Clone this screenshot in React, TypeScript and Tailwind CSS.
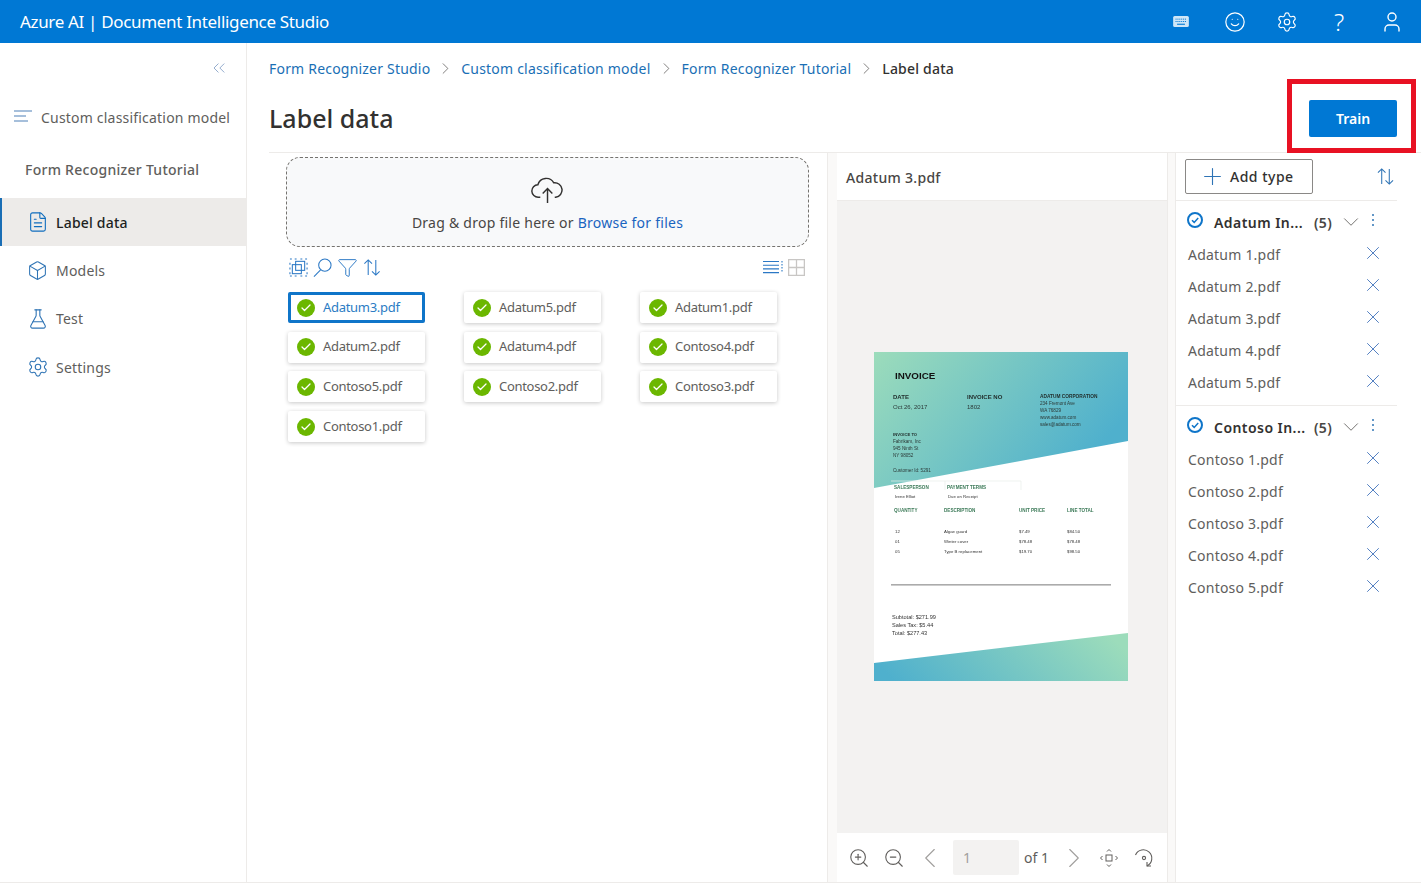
import { Box, ChevronDown, ChevronLeft, ChevronRight, ChevronsLeft, FileText, FlaskConical, Plus, Settings, Smile, User, X, ZoomIn, ZoomOut, Filter, Check } from "lucide-react"

const FILES = [
  "Adatum3.pdf", "Adatum5.pdf", "Adatum1.pdf",
  "Adatum2.pdf", "Adatum4.pdf", "Contoso4.pdf",
  "Contoso5.pdf", "Contoso2.pdf", "Contoso3.pdf",
  "Contoso1.pdf",
]

const GROUPS = [
  { name: "Adatum In...", files: ["Adatum 1.pdf", "Adatum 2.pdf", "Adatum 3.pdf", "Adatum 4.pdf", "Adatum 5.pdf"] },
  { name: "Contoso In...", files: ["Contoso 1.pdf", "Contoso 2.pdf", "Contoso 3.pdf", "Contoso 4.pdf", "Contoso 5.pdf"] },
]

function SortIcon({ className }: { className?: string }) {
  return (
    <svg viewBox="0 0 18 20" className={className} fill="none" stroke="currentColor" strokeWidth="1.1">
      <path d="M5 18V2M1 6l4-4 4 4M13 2v16M9 14l4 4 4-4" />
    </svg>
  )
}

function Invoice() {
  const label = "#3c7a58"
  return (
    <svg viewBox="0 0 254 329" className="h-[329px] w-[254px] blur-[0.3px]" fontFamily="Liberation Sans, sans-serif">
      <defs>
        <linearGradient id="top" x1="0" y1="0" x2="1" y2="0.45">
          <stop offset="0" stopColor="#9cdcbb" />
          <stop offset="1" stopColor="#4fb0cd" />
        </linearGradient>
        <linearGradient id="bottom" x1="0" y1="0.6" x2="1" y2="0.4">
          <stop offset="0" stopColor="#4fb0cd" />
          <stop offset="1" stopColor="#9cdcbb" />
        </linearGradient>
      </defs>
      <rect width="254" height="329" fill="#fff" />
      <polygon points="0,0 254,0 254,89 0,136" fill="url(#top)" />
      <polygon points="0,311 254,281 254,329 0,329" fill="url(#bottom)" />
      <text x="21" y="27" fontSize="9.8" fontWeight="700" fill="#111">INVOICE</text>
      <g fontSize="6" fontWeight="700" fill="#22302e">
        <text x="19" y="47">DATE</text>
        <text x="93" y="47">INVOICE NO</text>
        <text x="166" y="46" fontSize="4.8">ADATUM CORPORATION</text>
        <text x="19" y="84" fontSize="4.2">INVOICE TO</text>
      </g>
      <g fontSize="6" fill="#2c3a38">
        <text x="19" y="57">Oct 26, 2017</text>
        <text x="93" y="57">1802</text>
      </g>
      <g fontSize="4.6" fill="#2c3a38">
        <text x="166" y="53">234 Fremont Ave</text>
        <text x="166" y="60">WA 76829</text>
        <text x="166" y="67">www.adatum.com</text>
        <text x="166" y="74">sales@adatum.com</text>
        <text x="19" y="91">Fabrikam, Inc</text>
        <text x="19" y="98">945 Ninth St</text>
        <text x="19" y="105">NY 98052</text>
        <text x="19" y="120">Customer Id: 5291</text>
      </g>
      <path d="M17 129h130M71 129v9M147 129v9" stroke="#e8eeea" strokeWidth="0.7" fill="none" />
      <g fontSize="4.6" fontWeight="700" fill={label}>
        <text x="20" y="137">SALESPERSON</text>
        <text x="73" y="137">PAYMENT TERMS</text>
        <text x="20" y="160">QUANTITY</text>
        <text x="70" y="160">DESCRIPTION</text>
        <text x="145" y="160">UNIT PRICE</text>
        <text x="193" y="160">LINE TOTAL</text>
      </g>
      <g fontSize="4.3" fill="#333">
        <text x="21" y="146">Irene Elliot</text>
        <text x="74" y="146">Due on Receipt</text>
        <text x="21" y="181">12</text>
        <text x="70" y="181">Algae guard</text>
        <text x="145" y="181">$7.49</text>
        <text x="193" y="181">$84.50</text>
        <text x="21" y="191">01</text>
        <text x="70" y="191">Winter cover</text>
        <text x="145" y="191">$78.48</text>
        <text x="193" y="191">$78.48</text>
        <text x="21" y="201">05</text>
        <text x="70" y="201">Type B replacement</text>
        <text x="145" y="201">$19.70</text>
        <text x="193" y="201">$98.50</text>
      </g>
      <rect x="17" y="232" width="220" height="1.6" fill="#ababab" />
      <g fontSize="5.6" fill="#333">
        <text x="18" y="267">Subtotal: $271.99</text>
        <text x="18" y="275">Sales Tax: $5.44</text>
        <text x="18" y="283">Total: $277.43</text>
      </g>
    </svg>
  )
}

export default function App() {
  return (
    <div className="relative flex h-[883px] w-[1421px] flex-col overflow-hidden bg-white font-['Noto_Sans',sans-serif] text-[#323130]">
      <header className="flex h-[43px] shrink-0 items-center justify-between bg-[#0078d4] pl-5 pr-[17px] text-white">
        <span className="text-[17px] leading-none tracking-[-0.33px]">Azure AI | Document Intelligence Studio</span>
        <div className="flex items-center gap-[30px]">
          <svg viewBox="0 0 20 14" className="mr-[4px] h-[11px] w-[18px]">
            <rect width="20" height="14" rx="2" fill="#cfe6f7" />
            <path d="M3 4h14M3 7h14" stroke="#0078d4" strokeWidth="1.2" strokeDasharray="1.4 1" />
            <path d="M5 10.5h10" stroke="#0078d4" strokeWidth="1.4" />
          </svg>
          <Smile size={22} strokeWidth={1.3} />
          <Settings size={22} strokeWidth={1.3} />
          <span className="w-[22px] text-center text-[24px] font-light leading-none">?</span>
          <User size={24} strokeWidth={1.4} />
        </div>
      </header>

      <div className="flex min-h-0 flex-1 border-b border-[#edebe9]">
        <nav className="flex w-[247px] shrink-0 flex-col border-r border-[#edebe9] text-[14px] tracking-[0.2px]">
          <div className="flex h-[50px] items-center justify-end pr-[17px] text-[#7f9cc4]">
            <ChevronsLeft size={20} strokeWidth={1} />
          </div>
          <div className="mt-[8px] flex h-[32px] items-center gap-[9px] pl-[14px] text-[#605e5c]">
            <svg viewBox="0 0 18 12" className="mb-[3px] h-[12px] w-[18px]" stroke="#4f80b8" strokeWidth="1.1">
              <path d="M0 1h18M0 6h12M0 11h14" />
            </svg>
            <span className="text-[14px] tracking-[0.2px]">Custom classification model</span>
          </div>
          <div className="mt-[27px] h-[20px] pl-[25px] text-[14px] font-medium leading-[20px] tracking-[0.27px] text-[#605e5c]">Form Recognizer Tutorial</div>
          <div className="mt-[18px] flex h-[48px] items-center gap-[7px] border-l-2 border-[#1a6eb5] bg-[#edebe9] pl-[25px] font-medium text-[#201f1e]">
            <FileText size={22} strokeWidth={1.2} className="text-[#106ebe]" />
            <span>Label data</span>
          </div>
          {[
            { label: "Models", Icon: Box, size: 21 },
            { label: "Test", Icon: FlaskConical, size: 22 },
            { label: "Settings", Icon: Settings, size: 22 },
          ].map(({ label, Icon, size }) => (
            <div key={label} className="flex h-[48.5px] items-center pl-[27px] text-[#605e5c]">
              <span className="flex w-[29px] justify-start">
                <Icon size={size} strokeWidth={1.2} className="text-[#2f74b5]" />
              </span>
              <span>{label}</span>
            </div>
          ))}
        </nav>

        <main className="flex min-w-0 flex-1 flex-col pl-[22px]">
          <div className="flex h-[50px] items-center gap-[6px] text-[14px] tracking-[0.2px] text-[#1a6fb5]">
            <span>Form Recognizer Studio</span>
            <ChevronRight size={19} strokeWidth={1} className="text-[#605e5c]" />
            <span>Custom classification model</span>
            <ChevronRight size={19} strokeWidth={1} className="text-[#605e5c]" />
            <span>Form Recognizer Tutorial</span>
            <ChevronRight size={19} strokeWidth={1} className="text-[#605e5c]" />
            <span className="font-medium text-[#323130]">Label data</span>
          </div>
          <div className="flex h-[59px] items-center justify-between pb-[8px] pr-[24px]">
            <h1 className="text-[25px] font-medium leading-none text-[#323130]">Label data</h1>
            <button className="mt-[-1px] h-[37px] w-[88px] rounded-[2px] bg-[#0078d4] text-[14px] font-semibold text-white">Train</button>
          </div>

          <div className="flex min-h-0 flex-1 border-t border-[#edebe9] bg-[#faf9f8]">
            <section className="flex w-[559px] shrink-0 flex-col border-r border-[#edebe9] bg-white pl-[17px]">
              <div className="mt-[4px] flex h-[90px] w-[523px] flex-col items-center rounded-[14px] border border-dashed border-[#75736f] bg-[#f8f9fa]">
                <svg viewBox="0 0 36 28" className="mt-[19px] h-[27px] w-[36px]" fill="none" stroke="#323130" strokeWidth="1.5">
                  <path d="M10 21H8a6.5 6.5 0 0 1-.5-13A9 9 0 0 1 24 6a7.5 7.5 0 0 1 2 15h-1" />
                  <path d="M17.5 27V13M12.5 17l5-5 5 5" />
                </svg>
                <div className="mt-[9px] text-[14px] leading-[20px] tracking-[0.25px] text-[#484644]">
                  Drag &amp; drop file here or <span className="text-[#1a64c0]">Browse for files</span>
                </div>
              </div>

              <div className="mt-[9px] flex h-[22px] w-[522px] items-center justify-between pl-[3px] pr-[3px] text-[#2b78c5]">
                <div className="flex items-center gap-[5px]">
                  <svg viewBox="0 0 20 20" className="h-[19px] w-[19px]" fill="none" stroke="currentColor" strokeWidth="1.1">
                    <path d="M1 1h2M17 1h2M1 19h2M17 19h2M1 5v2M1 10v2M1 15v2M19 5v2M19 10v2M19 15v2M6 1h2M12 1h2M6 19h2M12 19h2" />
                    <rect x="3.5" y="7" width="9.5" height="9.5" />
                    <rect x="7" y="3.5" width="9.5" height="9.5" />
                  </svg>
                  <svg viewBox="0 0 20 20" className="h-[19px] w-[19px]" fill="none" stroke="currentColor" strokeWidth="1.1">
                    <circle cx="12.5" cy="7.5" r="6.5" />
                    <path d="M8 12.5L1 19.5" />
                  </svg>
                  <Filter size={21} strokeWidth={1.1} />
                  <SortIcon className="h-[19px] w-[18px]" />
                </div>
                <div className="flex items-center gap-[5px]">
                  <svg viewBox="0 0 20 14" className="h-[14px] w-[20px]" stroke="currentColor" strokeWidth="1.1">
                    <path d="M0 1.5h16M0 5.2h16M0 8.9h16M0 12.6h16" />
                    <path d="M19 1v12" strokeDasharray="1.5 1.5" />
                  </svg>
                  <svg viewBox="0 0 16 16" className="h-[17px] w-[17px]" fill="none" stroke="#c8c6c4" strokeWidth="1.2">
                    <path d="M.6.6h14.8v14.8H.6zM8 .6v14.8M.6 8h14.8" />
                  </svg>
                </div>
              </div>

              <div className="mt-[14px] grid grid-cols-[137px_137px_137px] gap-x-[39px] gap-y-[8.7px] pl-[2px]">
                {FILES.map((f, i) => (
                  <div
                    key={f}
                    className={`flex h-[31px] items-center gap-[8px] rounded-[2px] bg-white pl-[9px] text-[13px] tracking-[-0.3px] shadow-[0_1px_4px_rgba(0,0,0,0.22)] ${
                      i === 0 ? "border-[3px] border-[#0f75c9] !pl-[6px] text-[#2b7cc4] shadow-none" : "text-[#605e5c]"
                    }`}
                  >
                    <span className="flex h-[18px] w-[18px] shrink-0 items-center justify-center rounded-full bg-[#6bb700]">
                      <Check size={12} strokeWidth={2.6} className="text-white" />
                    </span>
                    {f}
                  </div>
                ))}
              </div>
            </section>

            <section className="ml-[9px] flex w-[331px] shrink-0 flex-col border-r border-[#edebe9] bg-white">
              <div className="flex h-[48px] items-center border-b border-[#edebe9] pl-[9px] pt-[1px] text-[14px] font-medium tracking-[0.3px] text-[#484644]">Adatum 3.pdf</div>
              <div className="flex flex-1 items-center justify-center bg-[#f3f2f1] pb-[2px]">
                <div className="mr-[3px]">
                  <Invoice />
                </div>
              </div>
              <div className="flex h-[49px] items-center pl-[11px] text-[#605e5c]">
                <ZoomIn size={22} strokeWidth={1.2} />
                <ZoomOut size={22} strokeWidth={1.2} className="ml-[13px]" />
                <ChevronLeft size={34} strokeWidth={0.8} className="ml-[8px] text-[#a19f9d]" />
                <span className="ml-[6px] flex h-[35px] w-[66px] items-center rounded-[2px] bg-[#f3f2f1] pl-[10px] text-[14px] text-[#a19f9d]">1</span>
                <span className="ml-[5px] w-[26px] whitespace-nowrap text-[14px]">of 1</span>
                <ChevronRight size={34} strokeWidth={0.8} className="ml-[7px] text-[#a19f9d]" />
                <svg viewBox="0 0 20 20" className="ml-[8px] h-[20px] w-[20px]" fill="none" stroke="currentColor" strokeWidth="1">
                  <rect x="7" y="7" width="6" height="6" />
                  <path d="M8 3.5l2-2 2 2M8 16.5l2 2 2-2M3.5 8l-2 2 2 2M16.5 8l2 2-2 2" />
                </svg>
                <svg viewBox="0 0 20 20" className="ml-[15px] h-[20px] w-[20px]" fill="none" stroke="currentColor" strokeWidth="1.1">
                  <path d="M1.5 7A8.5 8.5 0 1 1 13 18" />
                  <circle cx="10" cy="10" r="1.6" />
                  <path d="M13 14v4h4" />
                </svg>
              </div>
            </section>

            <aside className="ml-[7px] flex w-[222px] shrink-0 flex-col border-l border-[#edebe9] bg-white">
              <div className="flex h-[48px] items-center justify-between border-b border-[#edebe9] pl-[9px] pr-[3px]">
                <button className="flex h-[35px] w-[128px] items-center rounded-[2px] border border-[#8a8886] pl-[13px] text-[14px] font-medium tracking-[0.5px] text-[#323130]">
                  <Plus size={27} strokeWidth={1} className="mr-[4px] text-[#2f74b5]" />
                  Add type
                </button>
                <SortIcon className="h-[19px] w-[17px] text-[#2f74b5]" />
              </div>
              {GROUPS.map((g, gi) => (
                <div key={g.name} className={gi === 0 ? "h-[205px] border-b border-[#edebe9]" : ""}>
                  <div className="flex h-[37.5px] items-center pl-[11px] pt-[5px]">
                    <svg viewBox="0 0 16 16" className="mb-[4px] h-[16px] w-[16px]" fill="none" stroke="#0f75c9" strokeWidth="2">
                      <circle cx="8" cy="8" r="7" />
                      <path d="M5 8.2l2.2 2.2L11.2 6" strokeWidth="1.5" />
                    </svg>
                    <span className="ml-[11px] w-[100px] whitespace-nowrap text-[14px] font-semibold tracking-[0.45px] text-[#323130]">{g.name}</span>
                    <span className="text-[14px] font-semibold tracking-[0.3px] text-[#484644]">(5)</span>
                    <ChevronDown size={26} strokeWidth={0.8} className="ml-[6px] text-[#605e5c]" />
                    <svg viewBox="0 0 4 14" className="mb-[5px] ml-[7px] h-[14px] w-[4px]" fill="#2f74b5">
                      <circle cx="2" cy="2" r="1" />
                      <circle cx="2" cy="7" r="1" />
                      <circle cx="2" cy="12" r="1" />
                    </svg>
                  </div>
                  {g.files.map((f) => (
                    <div key={f} className="flex h-[32px] items-center justify-between pl-[12px] pr-[13px] text-[14px] tracking-[0.22px] text-[#605e5c]">
                      <span>{f}</span>
                      <X size={22} strokeWidth={0.9} className="mb-[3px] text-[#2f66b5]" />
                    </div>
                  ))}
                </div>
              ))}
            </aside>
            <div className="flex-1 bg-white" />
          </div>
        </main>
      </div>

      <div className="pointer-events-none absolute left-[1287px] top-[79px] h-[74px] w-[129px] border-[5px] border-[#e81123]" />
    </div>
  )
}
